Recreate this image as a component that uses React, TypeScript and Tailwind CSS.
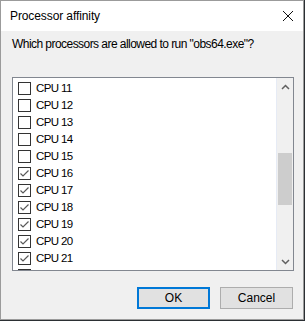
import React from 'react';

const cpus = [11, 12, 13, 14, 15, 16, 17, 18, 19, 20, 21];

const CheckBox = ({ checked }: { checked: boolean }) => (
  <span className="w-[13px] h-[13px] border border-[#333333] bg-white flex items-center justify-center shrink-0">
    {checked && (
      <svg width="11" height="11" viewBox="0 0 11 11" fill="none">
        <path d="M1.5 5.5 L4 8 L9.5 2.5" stroke="#595959" strokeWidth="1.2" />
      </svg>
    )}
  </span>
);

const App: React.FC = () => {
  return (
    <div className="w-[305px] h-[321px] bg-[#2b2f33]" style={{ fontFamily: '"Liberation Sans", Arial, sans-serif' }}>
      <div className="w-[304px] h-[320px] border border-[#9b9b9b] bg-[#f0f0f0] flex flex-col text-[12px] text-black">
        <div className="h-[30px] bg-white flex items-center justify-between pl-[9px] pr-[9px] shrink-0">
          <span className="tracking-[-0.1px]">Processor affinity</span>
          <svg width="12" height="12" viewBox="0 0 12 12" fill="none">
            <path d="M1 1 L11 11 M11 1 L1 11" stroke="#111" strokeWidth="1" />
          </svg>
        </div>
        <div className="pl-[11px] pt-[5px] h-[20px] leading-[16px] shrink-0 tracking-[-0.55px]">
          Which processors are allowed to run "obs64.exe"?
        </div>
        <div className="ml-[11px] mt-[26px] w-[282px] h-[194px] border border-[#828790] bg-white flex shrink-0">
          <div className="flex-1 overflow-hidden pt-[2px]">
            {cpus.map((n) => (
              <div key={n} className="h-[17px] flex items-center pl-[5px] gap-[5px]">
                <CheckBox checked={n >= 16} />
                <span className="leading-none text-[11.5px] tracking-[-0.6px]">CPU {n}</span>
              </div>
            ))}
            <div className="h-[17px] flex items-center pl-[5px]">
              <CheckBox checked />
            </div>
          </div>
          <div className="w-[17px] bg-[#f0f0f0] border-l border-[#e6ebf5] flex flex-col">
            <div className="h-[17px] flex items-center justify-center">
              <svg width="9" height="6" viewBox="0 0 9 6" fill="none">
                <path d="M1 5 L4.5 1.5 L8 5" stroke="#606060" strokeWidth="1.5" />
              </svg>
            </div>
            <div className="flex-1 pt-[58px] px-[1px]">
              <div className="h-[52px] bg-[#cdcdcd]" />
            </div>
            <div className="h-[17px] flex items-center justify-center">
              <svg width="9" height="6" viewBox="0 0 9 6" fill="none">
                <path d="M1 1 L4.5 4.5 L8 1" stroke="#606060" strokeWidth="1.5" />
              </svg>
            </div>
          </div>
        </div>
        <div className="flex justify-end gap-[10px] pr-[10px] mt-[16px]">
          <button className="w-[73px] h-[22px] border-2 border-[#0078d7] bg-[#e1e1e1] flex items-center justify-center">
            OK
          </button>
          <button className="w-[73px] h-[22px] border border-[#adadad] bg-[#e1e1e1] flex items-center justify-center">
            Cancel
          </button>
        </div>
      </div>
    </div>
  );
};

export default App;
